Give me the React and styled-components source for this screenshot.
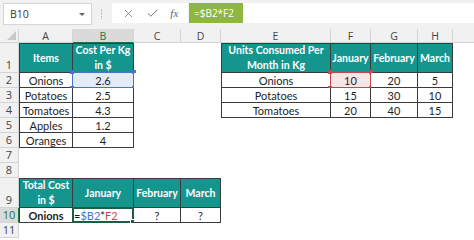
import React from 'react';
import styled, { createGlobalStyle } from 'styled-components';
import { X, Check } from 'lucide-react';

const COLS = ['A', 'B', 'C', 'D', 'E', 'F', 'G', 'H'];
const COL_WIDTHS = '19px 54px 61px 47px 40px 110px 40px 47px 35px 1fr';

const head = (text, extra = {}) => ({ kind: 'head', text, ...extra });
const data = (text, extra = {}) => ({ kind: 'data', text, ...extra });

const ROWS = [
  {
    n: 1, h: 30,
    cells: {
      A: head('Items', { top: true, left: true }),
      B: head(['Cost Per Kg', 'in $'], { top: true }),
      E: head(['Units Consumed Per', 'Month in Kg'], { top: true, left: true }),
      F: head('January', { top: true }),
      G: head('February', { top: true }),
      H: head('March', { top: true }),
    },
  },
  {
    n: 2, h: 15,
    cells: {
      A: data('Onions', { left: true }),
      B: data('2.6', { refColor: 'blue' }),
      E: data('Onions', { left: true }),
      F: data('10', { refColor: 'red' }),
      G: data('20'),
      H: data('5'),
    },
  },
  {
    n: 3, h: 15,
    cells: {
      A: data('Potatoes', { left: true }),
      B: data('2.5'),
      E: data('Potatoes', { left: true }),
      F: data('15'),
      G: data('30'),
      H: data('10'),
    },
  },
  {
    n: 4, h: 15,
    cells: {
      A: data('Tomatoes', { left: true }),
      B: data('4.3'),
      E: data('Tomatoes', { left: true }),
      F: data('20'),
      G: data('40'),
      H: data('15'),
    },
  },
  { n: 5, h: 15, cells: { A: data('Apples', { left: true }), B: data('1.2') } },
  { n: 6, h: 15, cells: { A: data('Oranges', { left: true }), B: data('4') } },
  { n: 7, h: 15, cells: {} },
  { n: 8, h: 15, cells: {} },
  {
    n: 9, h: 30,
    cells: {
      A: head(['Total Cost', 'in $'], { top: true, left: true }),
      B: head('January', { top: true }),
      C: head('February', { top: true }),
      D: head('March', { top: true }),
    },
  },
  {
    n: 10, h: 15, active: true,
    cells: {
      A: data('Onions', { left: true, bold: true }),
      B: data('formula', { formula: true }),
      C: data('?'),
      D: data('?'),
    },
  },
  { n: 11, h: 15, cells: {} },
];

const REF = {
  blue: { line: '#4a74c8', fill: '#e3ebf7' },
  red: { line: '#c9474f', fill: '#f8e6e6' },
};

const App = () => {
  return (
    <React.Fragment>
      <GlobalStyle />
      <Page>
        <FormulaBar>
          <NameBox>
            <span>B10</span>
            <Caret />
          </NameBox>
          <Grip />
          <ActionBox>
            <X size={13} strokeWidth={1.3} color="#666" />
            <Check size={13} strokeWidth={1.7} color="#666" />
            <Fx>fx</Fx>
          </ActionBox>
          <FormulaInput>
            <FormulaChip>=$B2*F2</FormulaChip>
          </FormulaInput>
        </FormulaBar>

        <Sheet $rows={ROWS.map((r) => r.h + 'px').join(' ')}>
          <Corner>
            <CornerMark />
          </Corner>
          {COLS.map((c) => (
            <ColHead key={c} $active={c === 'B'}>{c}</ColHead>
          ))}
          <ColHead $filler />

          {ROWS.map((row) => (
            <React.Fragment key={row.n}>
              <RowHead $active={row.active}>{row.n}</RowHead>
              {COLS.map((c) => {
                const cell = row.cells[c];
                if (!cell) return <Cell key={c} />;
                const ref = cell.refColor && REF[cell.refColor];
                return (
                  <Cell
                    key={c}
                    $kind={cell.kind}
                    $top={cell.top}
                    $left={cell.left}
                    $bold={cell.bold}
                    $fill={ref ? ref.fill : null}
                    $align={cell.formula ? 'left' : 'center'}
                  >
                    {cell.formula ? (
                      <span>
                        =<Blue>$B2</Blue>*<Red>F2</Red>
                      </span>
                    ) : Array.isArray(cell.text) ? (
                      <Lines>
                        {cell.text.map((t) => (
                          <span key={t}>{t}</span>
                        ))}
                      </Lines>
                    ) : (
                      cell.text
                    )}
                    {ref && (
                      <RefBox $color={ref.line}>
                        <Handle $color={ref.line} $x="left" $y="top" />
                        <Handle $color={ref.line} $x="right" $y="top" />
                        <Handle $color={ref.line} $x="left" $y="bottom" />
                        <Handle $color={ref.line} $x="right" $y="bottom" />
                      </RefBox>
                    )}
                    {cell.formula && (
                      <ActiveBox>
                        <FillHandle />
                      </ActiveBox>
                    )}
                  </Cell>
                );
              })}
              <Cell />
            </React.Fragment>
          ))}
        </Sheet>
      </Page>
    </React.Fragment>
  );
};

const GlobalStyle = createGlobalStyle`
  body {
    margin: 0;
    background: #fff;
    font-family: Lato, "Open Sans", sans-serif;
  }
`;

const Page = styled.div`
  width: 474px;
  height: 240px;
  overflow: hidden;
  background: #fff;
`;

const FormulaBar = styled.div`
  display: flex;
  align-items: flex-start;
  height: 29px;
  padding: 3px 0 0 3px;
  box-sizing: border-box;
  background: #f1f1f1;
`;

const NameBox = styled.div`
  display: flex;
  align-items: center;
  justify-content: space-between;
  width: 89px;
  height: 22px;
  padding: 0 6px 0 6px;
  box-sizing: border-box;
  background: #fff;
  border: 1px solid #d6d6d6;
  font-family: "Open Sans", sans-serif;
  font-size: 10.5px;
  color: #333;
`;

const Caret = styled.span`
  width: 0;
  height: 0;
  border-left: 3px solid transparent;
  border-right: 3px solid transparent;
  border-top: 3px solid #666;
`;

const Grip = styled.span`
  width: 0;
  height: 10px;
  margin: 6px 10px 0 9px;
  border-left: 1px dotted #b5b5b5;
`;

const ActionBox = styled.div`
  display: flex;
  align-items: center;
  justify-content: space-around;
  width: 76px;
  height: 20px;
  padding: 0 4px;
  box-sizing: border-box;
  background: #fff;
`;

const Fx = styled.span`
  font-family: "Liberation Serif", serif;
  font-style: italic;
  font-size: 11px;
  color: #666;
`;

const FormulaInput = styled.div`
  flex: 1;
  display: flex;
  height: 20px;
  margin-left: 1px;
  background: #fff;
`;

const FormulaChip = styled.div`
  display: flex;
  align-items: center;
  width: 54px;
  padding-left: 5px;
  box-sizing: border-box;
  background: #8db83d;
  color: #fff;
  font-family: "Open Sans", sans-serif;
  font-size: 10px;
`;

const Sheet = styled.div`
  display: grid;
  grid-template-columns: ${COL_WIDTHS};
  grid-template-rows: 14px ${(p) => p.$rows};
`;

const Corner = styled.div`
  position: relative;
  background: #f1f1f1;
  border-right: 1px solid #d4d4d4;
  border-bottom: 1px solid #d4d4d4;
`;

const CornerMark = styled.span`
  position: absolute;
  right: 2px;
  bottom: 2px;
  width: 0;
  height: 0;
  border-left: 9px solid transparent;
  border-bottom: 9px solid #c9c9c9;
`;

const ColHead = styled.div`
  display: flex;
  align-items: center;
  justify-content: center;
  box-sizing: border-box;
  background: ${(p) => (p.$active ? '#dadada' : '#f1f1f1')};
  border-right: ${(p) => (p.$filler ? 'none' : '1px solid #d4d4d4')};
  border-bottom: 1px solid ${(p) => (p.$active ? '#217346' : '#d4d4d4')};
  font-family: "Open Sans", sans-serif;
  font-size: 10.5px;
  color: ${(p) => (p.$active ? '#217346' : '#444')};
`;

const RowHead = styled.div`
  display: flex;
  align-items: flex-end;
  justify-content: center;
  box-sizing: border-box;
  background: ${(p) => (p.$active ? '#dadada' : '#f1f1f1')};
  border-right: 1px solid ${(p) => (p.$active ? '#217346' : '#d4d4d4')};
  border-bottom: 1px solid #d4d4d4;
  font-family: "Open Sans", sans-serif;
  font-size: 11px;
  line-height: 14px;
  color: ${(p) => (p.$active ? '#217346' : '#444')};
`;

const Cell = styled.div`
  position: relative;
  display: flex;
  align-items: center;
  justify-content: ${(p) => (p.$align === 'left' ? 'flex-start' : 'center')};
  padding: 0 1px;
  box-sizing: border-box;
  min-width: 0;
  white-space: nowrap;
  font-size: ${(p) => (p.$kind === 'head' ? '10.5px' : '11px')};
  line-height: 13px;
  text-align: center;
  color: ${(p) => (p.$kind === 'head' ? '#fff' : '#1e1e1e')};
  font-weight: ${(p) => (p.$kind === 'head' || p.$bold ? 700 : 400)};
  background: ${(p) => (p.$kind === 'head' ? '#14968f' : p.$fill || '#fff')};
  border-right: ${(p) => (p.$kind ? '1px solid #3b3b3b' : 'none')};
  border-bottom: ${(p) => (p.$kind ? '1px solid #3b3b3b' : 'none')};
  border-top: ${(p) => (p.$top ? '1px solid #3b3b3b' : 'none')};
  border-left: ${(p) => (p.$left ? '1px solid #3b3b3b' : 'none')};
`;

const Lines = styled.div`
  display: flex;
  flex-direction: column;
  align-items: center;
  gap: 2px;
`;

const Blue = styled.span`
  color: #4a74c8;
`;

const Red = styled.span`
  color: #c9474f;
`;

const RefBox = styled.div`
  position: absolute;
  inset: -1px -1px -1px -1px;
  border: 1px solid ${(p) => p.$color};
  pointer-events: none;
`;

const Handle = styled.span`
  position: absolute;
  width: 4px;
  height: 4px;
  background: ${(p) => p.$color};
  ${(p) => p.$x}: -3px;
  ${(p) => p.$y}: -3px;
`;

const ActiveBox = styled.div`
  position: absolute;
  inset: -1px -1px -1px -1px;
  border: 2px solid #1d5e43;
  pointer-events: none;
`;

const FillHandle = styled.span`
  position: absolute;
  right: -4px;
  bottom: -4px;
  width: 4px;
  height: 4px;
  background: #1d5e43;
  border: 1px solid #fff;
`;

export default App;
